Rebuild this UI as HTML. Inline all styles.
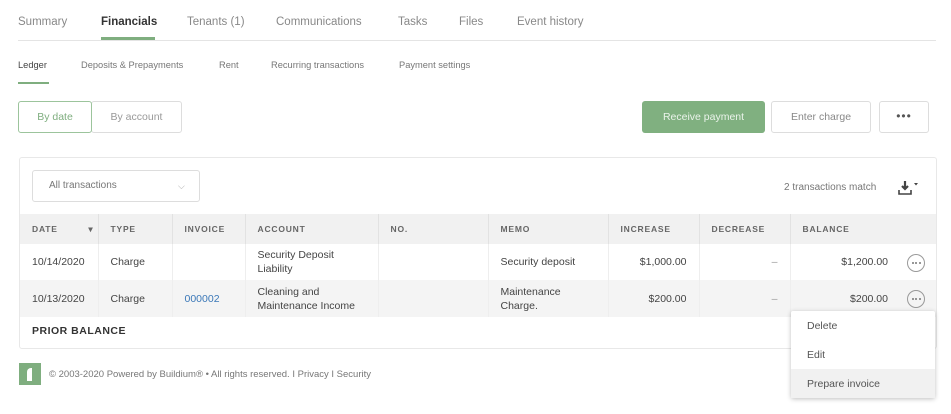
<!DOCTYPE html>
<html><head><style>
*{margin:0;padding:0;box-sizing:border-box}
body{width:951px;height:414px;background:#fff;font-family:"Liberation Sans",sans-serif;color:#444;position:relative;overflow:hidden;font-size:11px}
.a{position:absolute;white-space:nowrap}
.tab{font-size:11.5px;color:#888;top:16px}
.sub{font-size:9.3px;color:#777;top:60px}
.btn{position:absolute;border:1px solid #ddd;border-radius:3px;text-align:center;font-size:10.5px;color:#888}
table{position:absolute;left:20px;top:214px;width:916px;border-collapse:collapse;font-size:10.5px}
th{background:#f1f1f1;height:30px;text-align:left;font-size:8.5px;letter-spacing:.8px;color:#666;padding-left:12px;border-right:1px solid #e2e2e2}
td{padding-left:12px;border-right:1px solid #eee;color:#444;line-height:14px}
td.r{text-align:right;padding-right:12px;padding-left:0}
tr.r1 td{height:36px}
tr.r2 td{height:37px;background:#f4f4f4}
.dots{position:absolute;width:18px;height:18px;border:1px solid #999;border-radius:50%;display:flex;align-items:center;justify-content:center;gap:1.5px}
.dots i{width:2px;height:2px;border-radius:50%;background:#777}
</style></head><body>
<div class="a tab" style="left:18px">Summary</div>
<div class="a tab" style="left:101px;color:#333;font-weight:bold">Financials</div>
<div class="a" style="left:101px;top:37px;width:54px;height:3px;background:#7fae7f"></div>
<div class="a tab" style="left:187px">Tenants (1)</div>
<div class="a tab" style="left:276px">Communications</div>
<div class="a tab" style="left:398px">Tasks</div>
<div class="a tab" style="left:459px">Files</div>
<div class="a tab" style="left:517px">Event history</div>
<div class="a" style="left:18px;top:40px;width:918px;height:1px;background:#e4e4e4"></div>
<div class="a sub" style="left:18px;color:#444">Ledger</div>
<div class="a" style="left:18px;top:82px;width:31px;height:2px;background:#7fae7f"></div>
<div class="a sub" style="left:81px">Deposits &amp; Prepayments</div>
<div class="a sub" style="left:219px">Rent</div>
<div class="a sub" style="left:271px">Recurring transactions</div>
<div class="a sub" style="left:399px">Payment settings</div>
<div class="btn" style="left:18px;top:101px;width:74px;height:32px;line-height:30px;border-color:#9cc49c;color:#7fae7f;z-index:2">By date</div>
<div class="btn" style="left:91px;top:101px;width:91px;height:32px;line-height:30px;color:#999">By account</div>
<div class="btn" style="left:642px;top:101px;width:123px;height:32px;line-height:32px;background:#80b080;border:none;color:#eaf3ea">Receive payment</div>
<div class="btn" style="left:771px;top:101px;width:100px;height:32px;line-height:30px">Enter charge</div>
<div class="btn" style="left:879px;top:101px;width:50px;height:32px;line-height:28px;font-size:12px;color:#555;letter-spacing:1px">•••</div>
<div class="a" style="left:19px;top:157px;width:918px;height:192px;border:1px solid #e8e8e8;border-radius:3px"></div>
<div class="btn" style="left:32px;top:170px;width:168px;height:32px;line-height:30px;text-align:left;padding-left:16px;font-size:10px;color:#777">All transactions<span style="position:absolute;left:145px;top:0;color:#aaa;font-size:9px">⌵</span></div>
<div class="a" style="left:784px;top:182px;font-size:10px;color:#777">2 transactions match</div>
<svg class="a" style="left:897px;top:180px" width="24" height="16"><path d="M8 1v8M5 6l3 3 3-3" stroke="#444" stroke-width="2.2" fill="none"/><path d="M2 10v4h12v-4" stroke="#444" stroke-width="1.6" fill="none"/><path d="M17 3h4l-2 2.5z" fill="#444"/></svg>
<table>
<tr><th style="width:78px">DATE<span style="float:right;margin-right:4px">▾</span></th><th style="width:74px">TYPE</th><th style="width:73px">INVOICE</th><th style="width:133px">ACCOUNT</th><th style="width:110px">NO.</th><th style="width:120px">MEMO</th><th style="width:91px">INCREASE</th><th style="width:91px">DECREASE</th><th style="border:none">BALANCE</th></tr>
<tr class="r1"><td>10/14/2020</td><td>Charge</td><td></td><td>Security Deposit<br>Liability</td><td></td><td>Security deposit</td><td class="r">$1,000.00</td><td class="r" style="color:#999">–</td><td class="r" style="border:none;padding-right:48px">$1,200.00</td></tr>
<tr class="r2"><td>10/13/2020</td><td>Charge</td><td style="color:#3b78b8">000002</td><td>Cleaning and<br>Maintenance Income</td><td></td><td>Maintenance<br>Charge.</td><td class="r">$200.00</td><td class="r" style="color:#999">–</td><td class="r" style="border:none;padding-right:48px">$200.00</td></tr>
</table>
<div class="dots" style="left:907px;top:254px"><i></i><i></i><i></i></div>
<div class="dots" style="left:907px;top:290px"><i></i><i></i><i></i></div>
<div class="a" style="left:32px;top:325px;font-size:10.5px;font-weight:bold;color:#333;letter-spacing:.5px">PRIOR BALANCE</div>
<div class="a" style="left:791px;top:311px;width:144px;height:87px;background:#fff;box-shadow:0 1px 5px rgba(0,0,0,.25);border-radius:2px;font-size:10.5px;color:#555">
<div style="padding:9px 0 0 16px;height:29px">Delete</div>
<div style="padding:9px 0 0 16px;height:29px">Edit</div>
<div style="padding:9px 0 0 16px;height:29px;background:#f1f1f1">Prepare invoice</div>
</div>
<div class="a" style="left:19px;top:363px;width:22px;height:22px;background:#7fae7f"><div style="position:absolute;left:8px;top:5px;width:5px;height:13px;background:#fff;border-radius:4px 0 0 0"></div></div>
<div class="a" style="left:49px;top:369px;font-size:9.5px;color:#777">© 2003-2020 Powered by Buildium® • All rights reserved. I Privacy I Security</div>
</body></html>
